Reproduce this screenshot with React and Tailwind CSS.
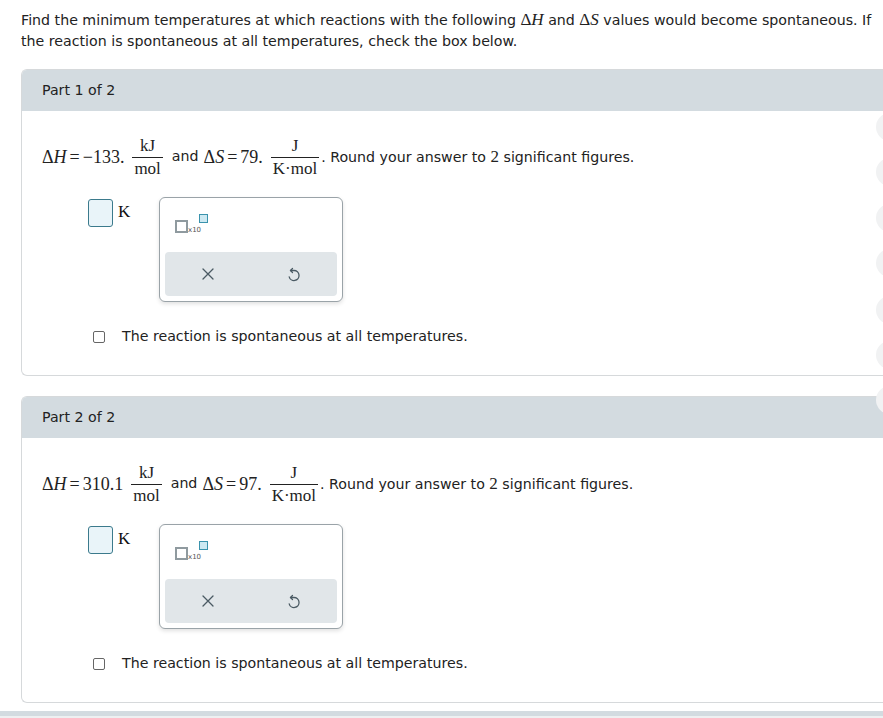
import React from "react";

const serif = { fontFamily: '"Liberation Serif", "Times New Roman", serif' };

const Frac = ({ top, bottom }) => (
    <span className="inline-flex flex-col items-center mx-[8px] text-[17px] leading-[19px]" style={serif}>
        <span className="px-[2px] pb-[2px]">{top}</span>
        <span className="self-stretch border-t border-[#222]"></span>
        <span className="px-[2px] pt-[1px]">{bottom}</span>
    </span>
);

const Ecuacion = ({ dh, ds }) => (
    <div className="flex items-center h-[42px] pl-[20px] text-[#222]">
        <span className="text-[18px]" style={serif}>
            Δ<i>H</i><span className="mx-[3px]">=</span>{dh}
        </span>
        <Frac top="kJ" bottom="mol" />
        <span className="mx-[1px]">and</span>
        <span className="ml-[4px] text-[18px]" style={serif}>
            Δ<i>S</i><span className="mx-[3px]">=</span>{ds}
        </span>
        <Frac top="J" bottom="K·mol" />
        <span className="-ml-[6px]">
            . Round your answer to <span className="text-[17px]" style={serif}>2</span> significant figures.
        </span>
    </div>
);

const IconoUndo = () => (
    <svg width="14" height="16" viewBox="0 0 14 16" fill="none" stroke="#4a5a63" strokeWidth="1.3" strokeLinecap="round" strokeLinejoin="round">
        <path d="M5.5 1.5 L3.5 3.5 L5.5 5.5" />
        <path d="M3.5 3.5 H7 A5 5 0 1 1 2.2 9.8" />
    </svg>
);

const IconoX = () => (
    <svg width="12" height="12" viewBox="0 0 12 12" fill="none" stroke="#4a5a63" strokeWidth="1.3" strokeLinecap="round">
        <path d="M1 1 L11 11 M11 1 L1 11" />
    </svg>
);

const Parte = ({ titulo, dh, ds }) => (
    <div className="border border-[#d6d9db] border-r-0 rounded-l-[6px] mr-[-10px]">
        <div className="h-[41px] bg-[#d3dbe0] rounded-tl-[5px] flex items-center pl-[20px] text-[#222]">
            {titulo}
        </div>
        <div className="pt-[25px] pb-[28px]">
            <Ecuacion dh={dh} ds={ds} />

            <div className="flex items-start mt-[19px] pl-[66px]">
                <div className="mt-[2px] w-[25px] h-[28px] bg-[#e9f4f9] border border-[#3b7a8c] rounded-[3px]"></div>
                <span className="ml-[5px] w-[13px] text-[17px] leading-[20px] mt-[5px] text-[#111]" style={serif}>K</span>
                <div className="ml-[28px] w-[184px] h-[105px] border border-[#9aa3a8] rounded-[6px] shadow-[0_2px_4px_rgba(0,0,0,0.12)] bg-white px-[5px] pb-[5px] flex flex-col">
                    <div className="h-[54px] relative">
                        <div className="absolute left-[10px] top-[22px] w-[13px] h-[13px] border-2 border-[#8f9a9f] bg-white"></div>
                        <span className="absolute left-[23px] top-[28px] text-[7px] leading-[8px] text-[#555]">x10</span>
                        <div className="absolute left-[34px] top-[16px] w-[9px] h-[9px] border-[1.5px] border-[#3a93ad] bg-[#cde9f2]"></div>
                    </div>
                    <div className="flex-1 bg-[#e1e6e9] rounded-[4px] flex items-center">
                        <div className="w-1/2 flex justify-center"><IconoX /></div>
                        <div className="w-1/2 flex justify-center mt-[1px]"><IconoUndo /></div>
                    </div>
                </div>
            </div>

            <div className="flex items-center h-[20px] mt-[25px] pl-[71px] text-[#222]">
                <span className="w-[12px] h-[12px] border border-[#666] rounded-[2px] bg-white"></span>
                <span className="ml-[17px]">The reaction is spontaneous at all temperatures.</span>
            </div>
        </div>
    </div>
);

export default function App() {
    const circulos = [113, 158, 204, 249, 296, 341, 386];
    return (
        <div
            className="relative w-[883px] h-[718px] overflow-hidden bg-white text-[14.2px]"
            style={{ fontFamily: '"DejaVu Sans", Verdana, sans-serif' }}
        >
            <div className="pl-[21px] pt-[9px]">
                <p className="leading-[21px] text-[#222] pr-[6px]">
                    Find the minimum temperatures at which reactions with the following{" "}
                    <span className="text-[17px]" style={serif}>Δ<i>H</i></span> and{" "}
                    <span className="text-[17px]" style={serif}>Δ<i>S</i></span> values would become spontaneous. If the
                    reaction is spontaneous at all temperatures, check the box below.
                </p>

                <div className="mt-[17px]">
                    <Parte titulo="Part 1 of 2" dh="−133." ds="79." />
                </div>
                <div className="mt-[20px]">
                    <Parte titulo="Part 2 of 2" dh="310.1" ds="97." />
                </div>
            </div>

            <div className="mt-[8px] h-[5px] bg-[#d3dbe0]"></div>
            <div className="h-[10px] bg-[#eef0f1]"></div>

            {circulos.map((y) => (
                <div
                    key={y}
                    className="absolute left-[876px] w-[28px] h-[28px] rounded-full bg-[#f1f2f3]"
                    style={{ top: y }}
                ></div>
            ))}
        </div>
    );
}
